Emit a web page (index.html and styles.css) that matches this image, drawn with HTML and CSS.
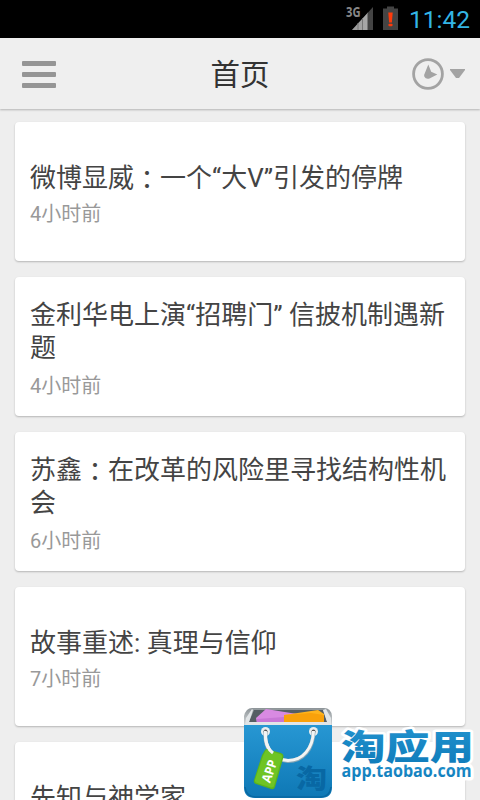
FILE: index.html
```html
<!DOCTYPE html>
<html lang="zh-CN">
<head>
<meta charset="utf-8">
<title>首页</title>
<link rel="stylesheet" href="styles.css">
</head>
<body>
<div class="statusbar">
  <svg class="signal" width="60" height="38" viewBox="0 0 60 38">
    <defs>
      <linearGradient id="sig" x1="0" x2="1" y1="0" y2="0">
        <stop offset="0" stop-color="#999"/><stop offset="1" stop-color="#aaa"/>
      </linearGradient>
    </defs>
    <text x="1" y="17" class="net" textLength="14.500" lengthAdjust="spacingAndGlyphs">3G</text>
    <path d="M7 30 28 7V30Z" fill="#444"/>
    <path d="M7 30 23 12.500V30Z" fill="url(#sig)"/>
    <path d="M13 30V23M17.500 30V18M22.500 30V13" stroke="#777" stroke-width="1"/>
    <path d="M38 8.500H42V6.500H49V8.500H53V30H38Z" fill="#444"/>
    <path d="M43.300 12.500H47.700L46.900 22.500H44.100Z" fill="#ff3a0a"/>
    <rect x="43.500" y="23.700" width="4" height="2.500" rx=".8" fill="#ff3a0a"/>
  </svg>
  <span class="clock">11:42</span>
</div>
<header class="appbar">
  <div class="menu"><i></i><i></i><i></i></div>
  <h1>首页</h1>
  <svg class="recent" width="56" height="34" viewBox="0 0 56 34">
    <circle cx="17" cy="17" r="14.400" fill="none" stroke="#a3a3a3" stroke-width="2.800"/>
    <path d="M17.300 7.500 20.200 14.800 26.300 17.600 18.500 21.400Q14.800 22.300 13.400 19.700 12.700 17.800 14.300 15Z" fill="#a3a3a3"/>
    <path d="M39 12H54V13L48 21H45L39 13Z" fill="#a3a3a3"/>
  </svg>
</header>
<main class="feed">
  <article class="card"><h2>微博显威<span class="colon" lang="zh-TW">：</span>一个“大V”引发的停牌</h2><p>4小时前</p></article>
  <article class="card tall"><h2>金利华电上演“招聘门” 信披机制遇新<br>题</h2><p>4小时前</p></article>
  <article class="card tall"><h2>苏鑫<span class="colon" lang="zh-TW">：</span>在改革的风险里寻找结构性机<br>会</h2><p>6小时前</p></article>
  <article class="card"><h2>故事重述: 真理与信仰</h2><p>7小时前</p></article>
  <article class="card last"><h2>先知与神学家</h2></article>
</main>
<svg class="badge" width="240" height="100" viewBox="240 700 240 100">
  <defs>
    <linearGradient id="bag" x1="0" x2="0" y1="0" y2="1">
      <stop offset="0" stop-color="#2797d3"/><stop offset="1" stop-color="#0e78b5"/>
    </linearGradient>
    <linearGradient id="rim" x1="0" x2="0" y1="0" y2="1">
      <stop offset="0" stop-color="#8d9498"/><stop offset="1" stop-color="#e4e7e8"/>
    </linearGradient>
    <linearGradient id="ink" x1="0" x2="0" y1="0" y2="1">
      <stop offset="0" stop-color="#2596d1"/><stop offset="1" stop-color="#0d7ab9"/>
    </linearGradient>
  </defs>
  <path d="M252 708H324Q331 708 332 716V729H244V716Q246 708 252 708Z" fill="url(#rim)"/>
  <path d="M254 710H323L328 724H248Z" fill="#555e64"/>
  <path d="M256 718 266 709 297 714V724H257Z" fill="#d88ae2"/>
  <path d="M257 719 284 717 297 724H257Z" fill="#c877d6"/>
  <path d="M284 715 318 710 324 714V724H284Z" fill="#ffb31c"/>
  <path d="M284 715 311 713 324 715V724H284Z" fill="#f9a10a"/>
  <path d="M246 718 252 709 253 710 249 722H327L323 710 326 709 331 718V726H245Z" fill="#e1e5e7"/>
  <path d="M244 725H332V787Q332 798 321 798H255Q244 798 244 787Z" fill="url(#bag)"/>
  <path d="M245 787Q246 797 256 797H320Q330 797 331 787" fill="none" stroke="#0868a2" stroke-width="1.500"/>
  <text transform="translate(296 788) scale(1 .85)" class="mark" textLength="31" lengthAdjust="spacingAndGlyphs">淘</text>
  <circle cx="265.500" cy="731.500" r="4.500" fill="#e9eeef"/>
  <circle cx="313.500" cy="731.500" r="4.500" fill="#e9eeef"/>
  <circle cx="265.500" cy="731.500" r="2" fill="#555"/>
  <circle cx="313.500" cy="731.500" r="2" fill="#555"/>
  <path d="M265.500 732C264 749 274 760 288 761 303 761 313 749 313.500 732" fill="none" stroke="#8aa7b5" stroke-width="4"/>
  <path d="M265.500 731C264 748 274 759.500 288 760.500 303 760.500 313 748 313.500 731" fill="none" stroke="#f2f4f4" stroke-width="3"/>
  <path d="M265 750Q267 748 270 750L281 753Q284 754 283.500 757L275 787Q274 790 271 789L256 784Q253 783 254 780L262 755Z" fill="#5bb51b"/>
  <path d="M265.500 751Q267 749 270 751L280 754Q282.500 755 282 757L274 786 Q273 788 271 787.500L257 783Q254.500 782 255 780L263 756Z" fill="#6fc424"/>
  <path d="M265.500 734C265 744 269 750 273 753" fill="none" stroke="#f2f4f4" stroke-width="3"/>
  <text class="tag" transform="translate(270 783.500) rotate(-71)" textLength="23" lengthAdjust="spacingAndGlyphs">APP</text>
  <text x="341.500" y="776.500" class="site" textLength="130" lengthAdjust="spacingAndGlyphs">app.taobao.com</text>
  <text transform="translate(341 759.500) scale(1 .82)" class="brand" textLength="133" lengthAdjust="spacingAndGlyphs">淘应用</text>
</svg>
</body>
</html>
```
FILE: styles.css
```css
* { box-sizing: border-box; margin: 0; padding: 0; }
html, body { height: 800px; overflow: hidden; }
body {
  width: 480px;
  position: relative;
  background: #eee;
  font-family: Roboto, "Noto Sans CJK SC", sans-serif;
}
.statusbar {
  height: 38px;
  background: #000;
  display: flex;
  align-items: center;
  justify-content: flex-end;
  padding-right: 9px;
}
.signal { margin-right: 4px; }
.net { font: bold 13.500px "Open Sans", sans-serif; fill: #888; }
.clock { font-size: 24.500px; line-height: 38px; color: #33b5e5; width: 62px; white-space: nowrap; padding-top: 1px; }
.appbar {
  height: 71px;
  background: #efefef;
  display: grid;
  grid-template-columns: 1fr auto 1fr;
  align-items: center;
  padding: 0 13px 0 22px;
  box-shadow: 0 1px 2px rgba(0,0,0,.25);
  position: relative;
}
.menu { width: 34px; display: grid; gap: 6px; padding-top: 2px; }
.menu i { height: 5px; background: #959595; border-radius: 1px; }
.appbar h1 { font-size: 29.500px; font-weight: 400; line-height: 40px; color: #333; margin-left: -9px; padding-top: 3px; }
.recent { justify-self: end; }
.feed { padding: 13px 15px 0; display: grid; gap: 16px; }
.card {
  height: 139px;
  background: #fff;
  border-radius: 4px;
  box-shadow: 0 1px 2px rgba(0,0,0,.24);
  padding: 40px 15px 0;
  white-space: nowrap;
}
.card.tall { padding-top: 22px; }
.card.last { height: 58px; border-radius: 4px 4px 0 0; overflow: hidden; }
.card h2 { font-size: 26px; font-weight: 400; line-height: 33px; color: #444; }
.card p { font-size: 20px; line-height: 24px; color: #999; margin-top: 7px; }
.card.tall p { margin-top: 9px; }
.colon { font-family: "Noto Sans CJK TC", sans-serif; line-height: 0; vertical-align: -2px; }
.badge { position: absolute; left: 240px; top: 700px; }
.mark { font: 900 31px "Noto Sans CJK SC", sans-serif; fill: #0868a4; }
.tag { font: bold 13px "Open Sans", sans-serif; fill: #fff; }
.brand { font: 900 43px "Noto Sans CJK SC", sans-serif; }
.site { font: bold 17px "Open Sans", sans-serif; }
.brand, .site { fill: url(#ink); stroke: #fff; stroke-width: 7px; stroke-linejoin: round; paint-order: stroke; }
.brand { stroke-width: 6px; }
```
